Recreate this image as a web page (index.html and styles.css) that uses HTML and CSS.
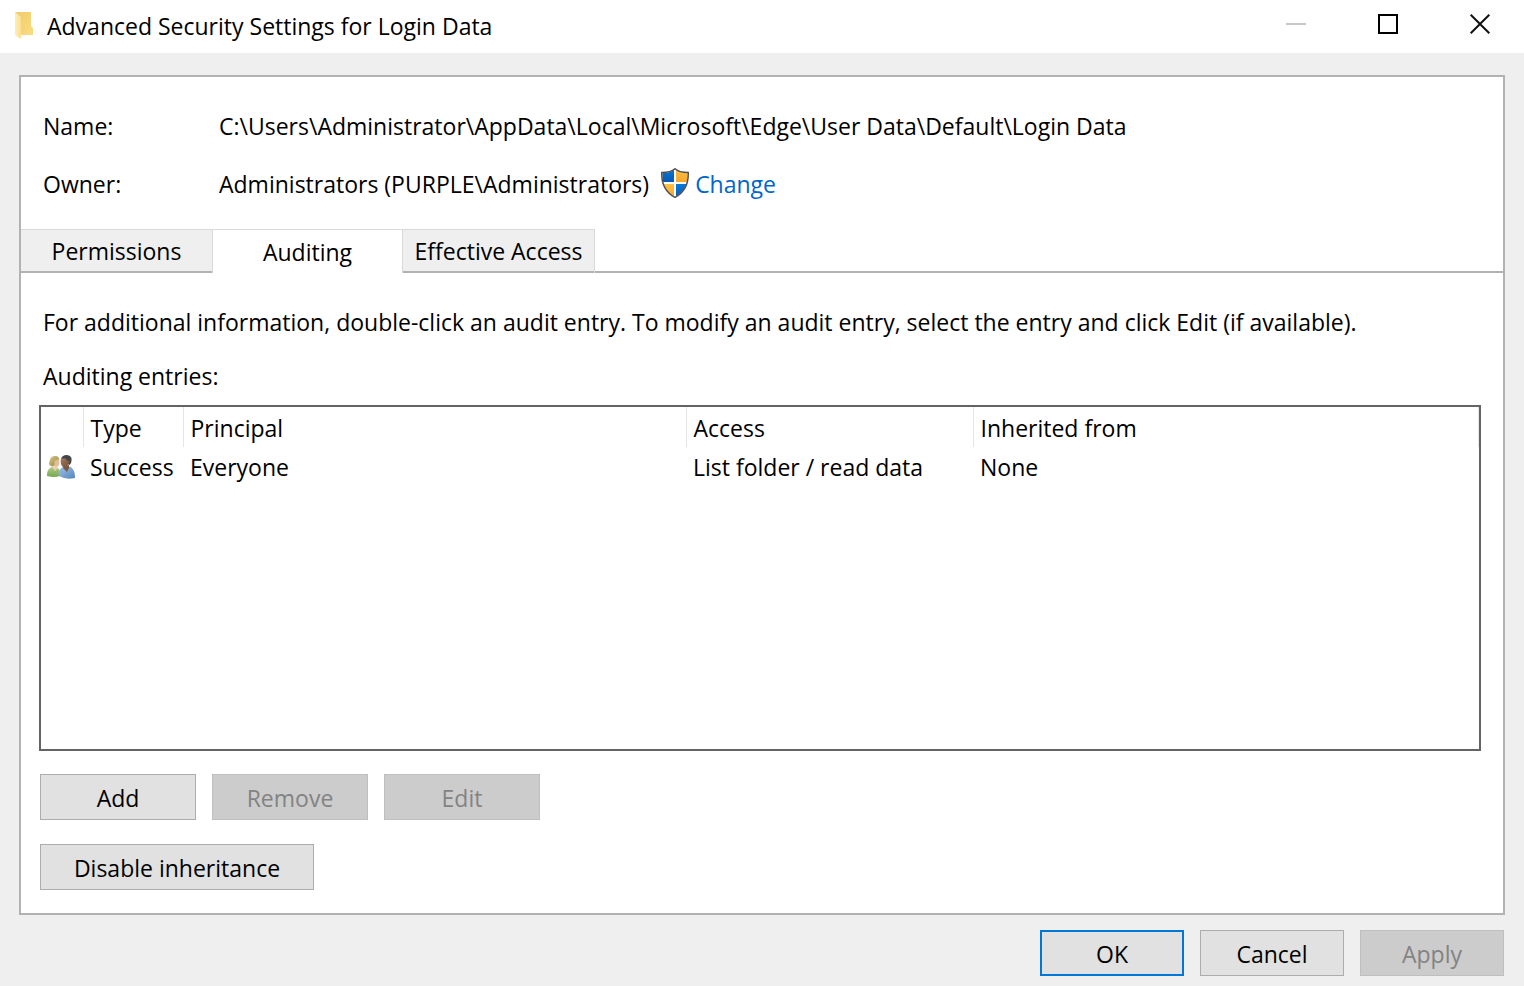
FILE: index.html
```html
<!DOCTYPE html>
<html lang="en">
<head>
<meta charset="utf-8">
<title>Advanced Security Settings for Login Data</title>
<link rel="stylesheet" href="styles.css">
</head>
<body>
<header class="titlebar">
  <svg class="folder" width="20" height="28" viewBox="0 0 20 28" aria-hidden="true">
    <defs>
      <linearGradient id="folder-back" x1="0" y1="0" x2="1" y2="1"><stop offset="0" stop-color="#eecb69"/><stop offset="1" stop-color="#fbdc80"/></linearGradient>
      <linearGradient id="folder-front" x1="0" y1="0" x2="1" y2="0"><stop offset="0" stop-color="#ffeeb8"/><stop offset="1" stop-color="#fbdf8e"/></linearGradient>
    </defs>
    <path d="M1 0H17V14L19 16V23H6L1 20Z" fill="url(#folder-back)"/>
    <path d="M1 0L7 5V27L1 23Z" fill="url(#folder-front)"/>
  </svg>
  <h1 class="title">Advanced Security Settings for Login Data</h1>
  <div class="window-controls">
    <button class="window-button" type="button" aria-label="Minimize" disabled>
      <svg width="20" height="20" viewBox="0 0 20 20"><path d="M0 10H20" stroke="#c8c8c8" stroke-width="2"/></svg>
    </button>
    <button class="window-button" type="button" aria-label="Maximize">
      <svg width="20" height="20" viewBox="0 0 20 20"><path d="M1 1H19V19H1Z" fill="none" stroke="#000" stroke-width="2"/></svg>
    </button>
    <button class="window-button" type="button" aria-label="Close">
      <svg width="20" height="20" viewBox="0 0 20 20"><path d="M.7 .7L19.3 19.3M19.3 .7L.7 19.3" stroke="#111" stroke-width="2"/></svg>
    </button>
  </div>
</header>
<main class="dialog">
  <section class="panel">
    <dl class="details">
      <dt>Name:</dt>
      <dd>C:\Users\Administrator\AppData\Local\Microsoft\Edge\User Data\Default\Login Data</dd>
      <dt>Owner:</dt>
      <dd>Administrators (PURPLE\Administrators)
        <a class="change" href="#">
          <svg width="28" height="30" viewBox="0 0 28 30" aria-hidden="true">
            <defs>
              <clipPath id="shield"><path d="M14 1.5C11 4 6 5 1.5 5C1 17 5 24 14 28.7C23 24 27 17 26.5 5C22 5 17 4 14 1.5Z"/></clipPath>
              <linearGradient id="shield-blue" x1="0" y1="0" x2="0" y2="1"><stop offset="0" stop-color="#0879d9"/><stop offset="1" stop-color="#0758b4"/></linearGradient>
              <linearGradient id="shield-gold" x1="0" y1="0" x2="0" y2="1"><stop offset="0" stop-color="#ffbf43"/><stop offset="1" stop-color="#f7a830"/></linearGradient>
            </defs>
            <g clip-path="url(#shield)">
              <rect width="28" height="30" fill="#fff"/>
              <rect width="13" height="14" fill="url(#shield-blue)"/>
              <rect x="15" width="13" height="14" fill="url(#shield-gold)"/>
              <rect y="16" width="13" height="14" fill="url(#shield-gold)"/>
              <rect x="15" y="16" width="13" height="14" fill="url(#shield-blue)"/>
            </g>
            <path d="M14 .8C11 3.5 6 4.5 .8 4.5C.3 17 5 24.5 14 29.3C23 24.5 27.7 17 27.2 4.5C22 4.5 17 3.5 14 .8Z" fill="none" stroke="#4d4f52" stroke-width="1.5"/>
          </svg>Change</a>
      </dd>
    </dl>
    <div class="tabs" role="tablist">
      <button class="tab" type="button" role="tab" aria-selected="false">Permissions</button>
      <button class="tab tab-active" type="button" role="tab" aria-selected="true">Auditing</button>
      <button class="tab" type="button" role="tab" aria-selected="false">Effective Access</button>
      <div class="tab-rest"></div>
    </div>
    <div class="content" role="tabpanel">
      <p class="hint">For additional information, double-click an audit entry. To modify an audit entry, select the entry and click Edit (if available).</p>
      <h2 class="list-label" id="entries-label">Auditing entries:</h2>
      <div class="list">
        <table class="entries" aria-labelledby="entries-label">
          <colgroup><col class="col-icon"><col class="col-type"><col class="col-principal"><col class="col-access"><col></colgroup>
          <thead>
            <tr><th></th><th>Type</th><th>Principal</th><th>Access</th><th>Inherited from</th></tr>
          </thead>
          <tbody>
            <tr>
              <td class="icon-cell">
                <svg width="30" height="26" viewBox="0 0 30 26" aria-hidden="true">
                  <defs>
                    <linearGradient id="green" x1="0" y1="0" x2="0" y2="1"><stop offset="0" stop-color="#b0cd85"/><stop offset="1" stop-color="#76a64c"/></linearGradient>
                    <linearGradient id="blue" x1="0" y1="0" x2="1" y2="1"><stop offset="0" stop-color="#a0c2e6"/><stop offset="1" stop-color="#5586bd"/></linearGradient>
                    <linearGradient id="hair" x1="0" y1="0" x2="1" y2="1"><stop offset="0" stop-color="#d3c684"/><stop offset="1" stop-color="#9b8744"/></linearGradient>
                    <linearGradient id="skin" x1="0" y1="0" x2="1" y2="1"><stop offset="0" stop-color="#a87b5b"/><stop offset="1" stop-color="#6e4c38"/></linearGradient>
                  </defs>
                  <path d="M0 22C0 17 1 15 5 13L11 14C13 16 14 19 13 22Q7 24 0 22Z" fill="url(#green)"/>
                  <path d="M5 13L8 17L11 14L10 12Z" fill="#edcdab"/>
                  <path d="M2 10C3 6 3 2 8 2C11 2 13 4 12 7L7 12C5 13 3 12 2 10Z" fill="url(#hair)"/>
                  <path d="M7.500 7L11.500 5C12.500 7 12.500 9 12 11C11 12.500 9 13 7 12Q8 10 7.500 7Z" fill="#e2bd95"/>
                  <path d="M12 22C11 18 12 15 16 13L23 12.500C27 15 28 19 28 24Q19 26 12 22Z" fill="url(#blue)"/>
                  <path d="M17 12L22 11L22 14L20 18L16 14Z" fill="#7d573f"/>
                  <path d="M14 5C15 0 23 0 24.500 4Q25 9 22.500 11L18 9Z" fill="#44474a"/>
                  <path d="M14 4.500L18.500 4.500L20.500 7C22.500 6 23 9 21 10.500C20 13 16 14 15 12Q13 9 14 4.500Z" fill="url(#skin)"/>
                </svg>
              </td>
              <td>Success</td><td>Everyone</td><td>List folder / read data</td><td>None</td>
            </tr>
          </tbody>
        </table>
      </div>
      <div class="actions">
        <button class="button action" type="button">Add</button>
        <button class="button action" type="button" disabled>Remove</button>
        <button class="button action" type="button" disabled>Edit</button>
      </div>
      <div class="actions">
        <button class="button inheritance" type="button">Disable inheritance</button>
      </div>
    </div>
  </section>
  <footer class="footer">
    <button class="button default" type="button">OK</button>
    <button class="button" type="button">Cancel</button>
    <button class="button" type="button" disabled>Apply</button>
  </footer>
</main>
</body>
</html>
```
FILE: styles.css
```css
* { box-sizing: border-box; }

body {
  display: flex;
  flex-direction: column;
  min-height: 100vh;
  margin: 0;
  background: #efefef;
  color: #000;
  font: 23px/32px "Segoe UI", "Open Sans", sans-serif;
}

button { font: inherit; color: inherit; }

.titlebar {
  display: flex;
  align-items: center;
  height: 53px;
  padding: 0 0 2px 14px;
  background: #fff;
}
.folder { margin-right: 13px; flex: none; }
.title { flex: 1; margin: 0; font-size: 23px; font-weight: 400; }
.window-controls { display: flex; align-self: flex-start; }
.window-button {
  display: flex;
  align-items: center;
  justify-content: center;
  width: 92px;
  height: 48px;
  padding: 0 0 0 3px;
  border: 0;
  background: none;
}

.dialog {
  display: flex;
  flex: 1;
  flex-direction: column;
  padding: 22px 19px 10px;
}
.panel {
  display: flex;
  flex: 1;
  flex-direction: column;
  border: 2px solid #b2b2b2;
  background: #fff;
}

.details {
  display: grid;
  grid-template-columns: 176px 1fr;
  row-gap: 26px;
  margin: 0;
  padding: 33px 22px 29px;
}
.details dd { display: flex; gap: 12px; margin: 0; }
.change {
  display: flex;
  align-items: center;
  gap: 6px;
  color: #0066cc;
  text-decoration: none;
}
.change svg { margin-bottom: 2px; }

.tabs { display: flex; height: 44px; }
.tab {
  width: 192px;
  padding: 0 0 2px;
  border: solid #d9d9d9;
  border-width: 1px 1px 0 0;
  box-shadow: inset 0 -2px #b2b2b2;
  background: #efefef;
}
.tab-active {
  width: 190px;
  padding: 0;
  box-shadow: none;
  background: #fff;
}
.tab-rest { flex: 1; box-shadow: inset 0 -2px #b2b2b2; }

.content {
  display: flex;
  flex: 1;
  flex-direction: column;
  padding: 33px 22px 23px 18px;
}
.hint { margin: 0 0 22px 4px; }
.list-label { margin: 0 0 13px 4px; font-size: 23px; font-weight: 400; }
.list {
  flex: 1;
  min-height: 200px;
  border: 2px solid #646464;
}
.entries { width: 100%; border-collapse: collapse; table-layout: fixed; }
.entries th, .entries td {
  height: 40px;
  padding: 2px 0 0 7px;
  font-weight: 400;
  text-align: left;
  white-space: nowrap;
}
.entries th { border-right: 1px solid #e5e5e5; }
.entries td { padding-top: 0; }
.entries .icon-cell { padding: 0 0 0 6px; }
.entries svg { display: block; }
.col-icon { width: 42px; }
.col-type { width: 100px; }
.col-principal { width: 503px; }
.col-access { width: 287px; }

.actions { display: flex; gap: 16px; padding: 0 1px; margin-top: 23px; }
.actions + .actions { margin-top: 24px; }
.button {
  width: 144px;
  height: 46px;
  padding: 2px 0 0;
  border: 1px solid #adadad;
  background: #e1e1e1;
}
.button:disabled { border-color: #bfbfbf; background: #ccc; color: #838383; }
.action { width: 156px; }
.inheritance { width: 274px; }
.default { border: 2px solid #0078d7; }

.footer { display: flex; justify-content: flex-end; gap: 16px; padding-right: 1px; margin-top: 15px; }
```
